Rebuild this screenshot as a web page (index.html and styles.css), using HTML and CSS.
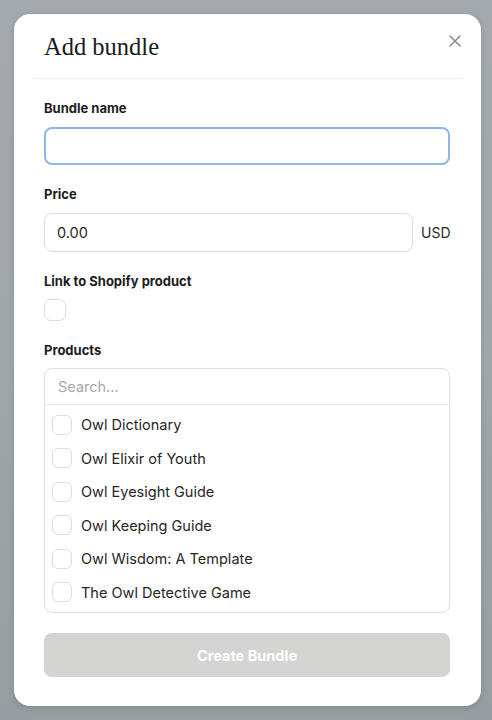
FILE: index.html
```html
<!DOCTYPE html>
<html>
<head>
<meta charset="utf-8">
<link rel="stylesheet" href="styles.css">
</head>
<body>
<div class="modal">
  <div class="modal-header">
    <h1 class="title">Add bundle</h1>
    <button class="close" aria-label="Close">
      <svg width="12" height="12" viewBox="0 0 12 12"><path d="M1 1L11 11M11 1L1 11" stroke="#8a8a8a" stroke-width="1.5" stroke-linecap="round"/></svg>
    </button>
  </div>
  <div class="modal-body">
    <div class="field">
      <label class="label">Bundle name</label>
      <div class="input focused"></div>
    </div>
    <div class="field">
      <label class="label">Price</label>
      <div class="price-row">
        <div class="input">0.00</div>
        <span class="currency">USD</span>
      </div>
    </div>
    <div class="field">
      <label class="label">Link to Shopify product</label>
      <span class="checkbox big"></span>
    </div>
    <div class="field">
      <label class="label">Products</label>
      <div class="products">
        <div class="search">Search...</div>
        <ul class="list">
          <li class="item"><span class="checkbox"></span>Owl Dictionary</li>
          <li class="item"><span class="checkbox"></span>Owl Elixir of Youth</li>
          <li class="item"><span class="checkbox"></span>Owl Eyesight Guide</li>
          <li class="item"><span class="checkbox"></span>Owl Keeping Guide</li>
          <li class="item"><span class="checkbox"></span>Owl Wisdom: A Template</li>
          <li class="item"><span class="checkbox"></span>The Owl Detective Game</li>
        </ul>
      </div>
    </div>
    <button class="submit">Create Bundle</button>
  </div>
</div>
</body>
</html>
```
FILE: styles.css
```css
* { box-sizing: border-box; }
html, body { margin: 0; padding: 0; }
body {
  width: 492px;
  height: 720px;
  overflow: hidden;
  background: linear-gradient(180deg, #a3a9ac 0%, #a0a7aa 50%, #969ea2 100%);
  padding: 14px 11px 0 14px;
  font-family: "Inter", "Liberation Sans", sans-serif;
  color: #1f1f1f;
}
.modal {
  width: 467px;
  height: 692px;
  background: #fff;
  border-radius: 16px;
  box-shadow: 0 2px 6px rgba(0,0,0,0.12);
}
.modal-header {
  height: 65px;
  margin: 0 19px;
  border-bottom: 1px solid #ebebeb;
  display: flex;
  justify-content: space-between;
  align-items: flex-start;
  padding: 0 0 0 11px;
}
.title {
  margin: 19px 0 0;
  font-family: "Liberation Serif", "DejaVu Serif", serif;
  font-weight: 400;
  font-size: 24.5px;
  line-height: 27px;
  color: #1a1a1a;
  letter-spacing: 0;
}
.close {
  margin: 20px 0 0;
  padding: 0;
  border: 0;
  background: none;
  width: 14px;
  height: 14px;
  display: flex;
  align-items: center;
  justify-content: center;
}
.modal-body {
  padding: 20px 31px 30px 30px;
  display: flex;
  flex-direction: column;
}
.field {
  display: flex;
  flex-direction: column;
  margin-bottom: 20px;
}
.label {
  font-size: 13px;
  font-weight: 700;
  line-height: 18px;
  color: #1c1c1c;
  margin-bottom: 10px;
}
.input {
  height: 38px;
  border: 1px solid #dcdcdc;
  border-radius: 8px;
  padding: 0 12px;
  font-size: 14.5px;
  line-height: 36px;
  color: #2a2a2a;
}
.price-row .input { height: 39px; line-height: 37px; }
.input.focused {
  border: 2px solid #8fb5ec;
}
.price-row {
  display: flex;
  align-items: center;
  gap: 8px;
}
.price-row .input { flex: 1; }
.currency {
  font-size: 14px;
  color: #2a2a2a;
  width: 29px;
}
.checkbox {
  display: inline-block;
  width: 20px;
  height: 20px;
  border: 1px solid #dcdcdc;
  border-radius: 6px;
  flex: none;
}
.checkbox.big {
  width: 22px;
  height: 22px;
  border-radius: 7px;
  margin-top: -1px;
}
.products {
  border: 1px solid #dedede;
  border-radius: 8px;
  margin-top: -1px;
}
.search {
  height: 36px;
  border-bottom: 1px solid #e6e6e6;
  padding: 0 13px;
  font-size: 14.5px;
  line-height: 35px;
  color: #a8a8a8;
}
.list {
  list-style: none;
  margin: 0;
  padding: 3px 0 3px;
}
.item {
  height: 33.5px;
  display: flex;
  align-items: center;
  gap: 9px;
  padding-left: 7px;
  font-size: 14.5px;
  color: #262626;
}
.submit {
  margin-top: 0;
  height: 44px;
  border: 0;
  border-radius: 8px;
  background: #d4d4d3;
  color: #fff;
  font-family: "Inter", "Liberation Sans", sans-serif;
  font-weight: 700;
  font-size: 14.5px;
}
```
